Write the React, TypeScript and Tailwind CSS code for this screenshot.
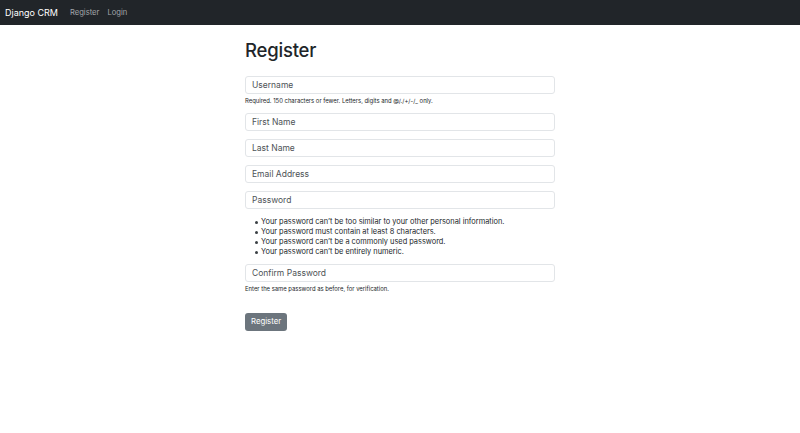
import React from 'react';

const fields = ['First Name', 'Last Name', 'Email Address'];

const passwordRules = [
  "Your password can’t be too similar to your other personal information.",
  'Your password must contain at least 8 characters.',
  "Your password can’t be a commonly used password.",
  "Your password can’t be entirely numeric.",
];

function Field({ placeholder }: { placeholder: string }) {
  return (
    <input
      type="text"
      placeholder={placeholder}
      className="block h-[18px] w-full rounded-[3px] border border-[#e2e5e8] bg-white px-[6px] text-[8.5px] text-[#212529] placeholder:text-[#4d5256] outline-none"
    />
  );
}

export default function App() {
  return (
    <div className="min-h-[433px] bg-white font-['Inter','Liberation_Sans',sans-serif] text-[#212529]">
      <nav className="flex h-[25px] items-center bg-[#212529] px-[5px]">
        <span className="mr-[12px] text-[9px] text-white">Django CRM</span>
        <div className="flex gap-[8px] text-[7.6px] text-[#a3a6a9]">
          <a href="#">Register</a>
          <a href="#">Login</a>
        </div>
      </nav>

      <main className="mx-auto w-[310px] pt-[14px]">
        <h1 className="text-[18.5px] leading-[1.2] font-medium tracking-[-0.2px]">Register</h1>

        <form className="mt-[15px]">
          <Field placeholder="Username" />
          <p className="mt-[3px] text-[5.9px] leading-[8px] text-[#212529]">
            Required. 150 characters or fewer. Letters, digits and @/./+/-/_ only.
          </p>

          <div className="mt-[8px] flex flex-col gap-[8px]">
            {fields.map((f) => (
              <Field key={f} placeholder={f} />
            ))}
            <Field placeholder="Password" />
          </div>

          <ul className="mt-[8px] flex flex-col pl-[10px] text-[7.4px] leading-[10px] text-[#212529]">
            {passwordRules.map((r) => (
              <li key={r} className="flex items-center gap-[3px]">
                <span className="size-[3px] shrink-0 rounded-full bg-[#3a3f44]" />
                <span>{r}</span>
              </li>
            ))}
          </ul>

          <div className="mt-[7px]">
            <Field placeholder="Confirm Password" />
          </div>
          <p className="mt-[3px] text-[5.9px] leading-[8px] text-[#212529]">
            Enter the same password as before, for verification.
          </p>

          <button
            type="submit"
            className="mt-[20px] h-[18px] rounded-[3px] bg-[#6c757d] px-[6px] text-[7.8px] text-white"
          >
            Register
          </button>
        </form>
      </main>
    </div>
  );
}
